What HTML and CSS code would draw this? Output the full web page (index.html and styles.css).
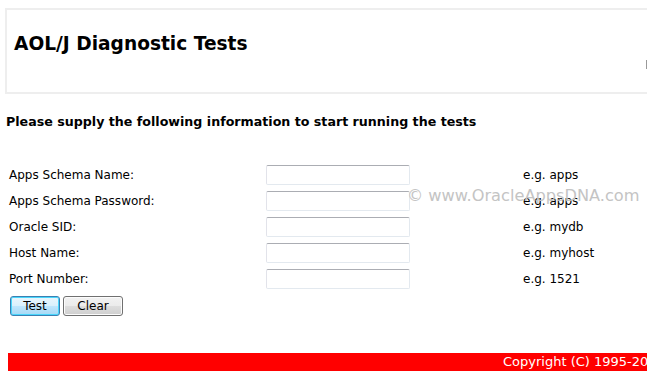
FILE: index.html
```html
<!DOCTYPE html>
<html>
<head>
<meta charset="utf-8">
<link rel="stylesheet" href="styles.css">
</head>
<body>
<div class="header">
  <h1 class="title">AOL/J Diagnostic Tests</h1>
  <span class="mark"></span>
</div>
<p class="intro">Please supply the following information to start running the tests</p>
<form class="diag">
  <div class="grid">
    <label class="lbl">Apps Schema Name:</label><input class="field" type="text"><span class="hint">e.g. apps</span>
    <label class="lbl">Apps Schema Password:</label><input class="field" type="password"><span class="hint">e.g. apps</span>
    <label class="lbl">Oracle SID:</label><input class="field" type="text"><span class="hint">e.g. mydb</span>
    <label class="lbl">Host Name:</label><input class="field" type="text"><span class="hint">e.g. myhost</span>
    <label class="lbl">Port Number:</label><input class="field" type="text"><span class="hint">e.g. 1521</span>
  </div>
  <div class="buttons">
    <button type="button" class="btn btn-focus">Test</button><button type="button" class="btn btn-clear">Clear</button>
  </div>
</form>
<div class="watermark">© www.OracleAppsDNA.com</div>
<div class="footer"><span class="copy">Copyright (C) 1995-2006 Oracle Corporation, Redwood Shores, CA.</span></div>
</body>
</html>
```
FILE: styles.css
```css
html, body {
  margin: 0;
  padding: 0;
  background: #fff;
  overflow: hidden;
}
body {
  width: 647px;
  height: 371px;
  position: relative;
  font-family: "DejaVu Sans", Verdana, sans-serif;
  font-size: 12px;
  color: #000;
}
.header {
  margin: 8px 0 0 5px;
  height: 82px;
  width: 700px;
  border: 2px solid #eeeeee;
  display: flex;
  align-items: center;
  position: relative;
}
.title {
  margin: 0 0 0 7px;
  font-size: 18.6px;
  font-weight: bold;
  position: relative;
  top: -8px;
}
.mark {
  position: absolute;
  left: 639px;
  top: 50px;
  width: 2px;
  height: 9px;
  background: #999;
}
.intro {
  margin: 20px 0 0 6px;
  font-size: 12.65px;
  font-weight: bold;
  line-height: 16px;
}
.diag {
  margin: 35px 0 0 9px;
}
.grid {
  display: grid;
  grid-template-columns: 257px 257px auto;
  grid-auto-rows: 20px;
  row-gap: 6px;
  align-items: center;
}
.field {
  box-sizing: border-box;
  width: 144px;
  height: 20px;
  margin: 0;
  border: 1px solid #e3e9ef;
  border-top-color: #abadb3;
  border-left-color: #e2e3ea;
  border-radius: 2px;
  background: #fff;
}
.buttons {
  margin-top: 7px;
  margin-left: 1px;
  display: flex;
  gap: 3px;
}
.btn {
  box-sizing: border-box;
  height: 20px;
  padding: 0;
  font-family: "DejaVu Sans", Verdana, sans-serif;
  font-size: 12px;
  color: #000;
  border-radius: 3px;
  line-height: 16px;
}
.btn-focus {
  width: 50px;
  border: 1px solid #3c7fb1;
  background: linear-gradient(#eaf6fd 0%, #d9f0fc 50%, #bee6fd 51%, #a7d9f5 100%);
  box-shadow: inset 0 0 0 1px #48d6fc;
}
.btn-clear {
  width: 60px;
  border: 1px solid #707070;
  background: linear-gradient(#f2f2f2 0%, #ebebeb 50%, #dddddd 51%, #cfcfcf 100%);
  box-shadow: inset 0 0 0 1px #fcfcfc;
}
.watermark {
  position: absolute;
  left: 407px;
  top: 186px;
  font-size: 16.2px;
  color: #c4c4c4;
  white-space: nowrap;
}
.footer {
  position: absolute;
  left: 8px;
  top: 353px;
  width: 700px;
  height: 18px;
  background: #ff0000;
  color: #fff;
  font-size: 13px;
  line-height: 18px;
  white-space: nowrap;
}
.copy {
  margin-left: 495px;
}
```
